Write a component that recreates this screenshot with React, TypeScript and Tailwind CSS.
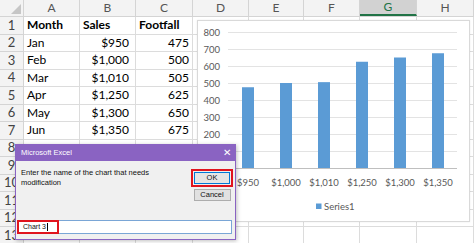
import React from 'react';

const colWidths = ['w-[56px]', 'w-[56px]', 'w-[57px]', 'w-[56px]', 'w-[55px]', 'w-[56px]', 'w-[57px]', 'w-[57px]'];
const letters = ['A', 'B', 'C', 'D', 'E', 'F', 'G', 'H'];

const data: [string, string, string][] = [
  ['Month', 'Sales', 'Footfall'],
  ['Jan', '$950', '475'],
  ['Feb', '$1,000', '500'],
  ['Mar', '$1,010', '505'],
  ['Apr', '$1,250', '625'],
  ['May', '$1,300', '650'],
  ['Jun', '$1,350', '675'],
];

const bars = [
  { label: '$950', value: 475 },
  { label: '$1,000', value: 500 },
  { label: '$1,010', value: 505 },
  { label: '$1,250', value: 625 },
  { label: '$1,300', value: 650 },
  { label: '$1,350', value: 675 },
];

const font = { fontFamily: 'Lato, "Liberation Sans", sans-serif' };

const Chart = () => {
  const axisY = 147;
  const scale = 0.17;
  return (
    <div className="absolute left-[197px] top-[20px] w-[273px] h-[202px] bg-white border border-[#d9d9d9] shadow-[0_0_2px_rgba(0,0,0,0.08)]">
      <svg width="271" height="200" viewBox="0 0 271 200" style={font}>
        {[800, 700, 600, 500, 400, 300, 200, 100, 0].map((v, i) => {
          const y = 11 + i * 17;
          return (
            <g key={v}>
              <line x1="30" x2="259" y1={y + 0.5} y2={y + 0.5} stroke={v === 0 ? '#bfbfbf' : '#e3e3e3'} strokeWidth="1" />
              <text x="22" y={y + 3.5} textAnchor="end" fontSize="9.5" fill="#595959">
                {v}
              </text>
            </g>
          );
        })}
        {bars.map((b, i) => {
          const cx = 50 + i * 38;
          const h = b.value * scale;
          return (
            <g key={b.label}>
              <rect x={cx - 6} y={axisY - h} width="12" height={h} fill="#5b9bd5" />
              <text x={cx} y="164.5" textAnchor="middle" fontSize="9.5" fill="#595959">
                {b.label}
              </text>
            </g>
          );
        })}
        <rect x="118" y="182.5" width="5.5" height="5.5" fill="#5b9bd5" />
        <text x="126" y="188.5" fontSize="9.5" fill="#595959">
          Series1
        </text>
      </svg>
    </div>
  );
};

const Dialog = () => {
  const dfont = { fontFamily: '"Liberation Sans", Arial, sans-serif' };
  return (
    <div
      className="absolute left-[15px] top-[144px] w-[221px] h-[96px] flex flex-col bg-[#f0f0f0] border border-[#8a63c2] shadow-[1px_1px_4px_rgba(0,0,0,0.25)]"
      style={dfont}
    >
      <div className="h-[16px] bg-[#8a63c2] flex items-center justify-between pl-[5px] pr-[4px] text-white">
        <span className="text-[7.5px]">Microsoft Excel</span>
        <span className="text-[10px] leading-none">✕</span>
      </div>
      <div className="flex justify-between pl-[5px] pr-[2px] pt-[7px]">
        <div className="text-[7.5px] leading-[10px] text-[#111] w-[140px]">
          Enter the name of the chart that needs modification
        </div>
        <div className="flex flex-col items-center gap-[2px] pt-[1px]">
          <div className="border-2 border-[#e0141e] p-[1px]">
            <div className="w-[36px] h-[12px] border border-[#0078d7] bg-[#e5e5e5] flex items-center justify-center text-[7.5px] text-[#111]">
              OK
            </div>
          </div>
          <div className="w-[37px] h-[12px] border border-[#adadad] bg-[#e1e1e1] flex items-center justify-center text-[7.5px] text-[#111]">
            Cancel
          </div>
        </div>
      </div>
      <div className="mt-auto mb-[5px] ml-[1px] mr-[3px] relative">
        <div className="h-[14px] bg-white border border-[#7aa6d6] flex items-center pl-[5px] text-[7px] text-[#111]">
          Chart 3<span className="w-px h-[8px] bg-black ml-[1px]" />
        </div>
        <div className="absolute left-0 top-0 w-[42px] h-[14px] border-2 border-[#e0141e]" />
      </div>
    </div>
  );
};

export default function App() {
  const rows = Array.from({ length: 13 }, (_, i) => i + 1);
  return (
    <div className="relative w-[474px] h-[243px] overflow-hidden bg-white" style={font}>
      <div className="flex h-[17px] bg-[#f3f3f3] border-b border-[#d4d4d4]">
        <div className="w-[24px] border-r border-[#d4d4d4] relative">
          <div className="absolute right-[2px] bottom-[2px] w-0 h-0 border-l-[10px] border-l-transparent border-b-[10px] border-b-[#c6c6c6]" />
        </div>
        {letters.map((l, i) => (
          <div
            key={l}
            className={`${colWidths[i]} flex items-center justify-center text-[12px] border-r border-[#d4d4d4] ${
              l === 'G' ? 'bg-[#d2d2d2] text-[#217346] border-b-2 border-b-[#217346]' : 'text-[#555]'
            }`}
          >
            {l}
          </div>
        ))}
      </div>
      {rows.map((r) => {
        const d = data[r - 1];
        return (
          <div key={r} className="flex h-[17.5px]">
            <div className="w-[24px] bg-[#f3f3f3] border-r border-b border-[#d4d4d4] flex items-center justify-center text-[13px] text-[#444]">
              {r}
            </div>
            {letters.map((l, i) => {
              let content: string = '';
              let cls = 'pl-[3px]';
              if (d && i < 3) {
                content = d[i];
                if (r > 1 && i === 1) cls = 'justify-end pr-[6px]';
                if (r > 1 && i === 2) cls = 'justify-end pr-[3px]';
              }
              return (
                <div
                  key={l}
                  className={`${colWidths[i]} flex items-center border-r border-b border-[#dcdcdc] text-[12px] text-black ${cls} ${
                    r === 1 ? 'font-bold' : ''
                  }`}
                >
                  {content}
                </div>
              );
            })}
          </div>
        );
      })}
      <Chart />
      <Dialog />
    </div>
  );
}
